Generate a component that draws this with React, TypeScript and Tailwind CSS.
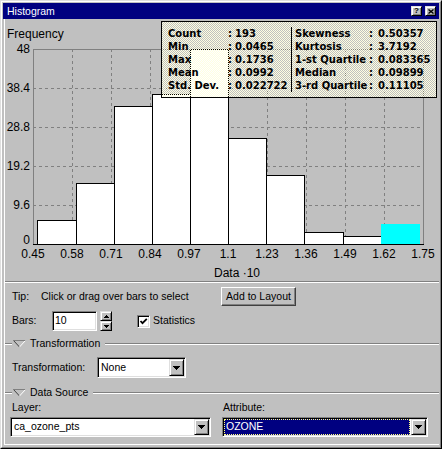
import React from "react";

const counts = [6, 15, 34, 37, 48, 26, 17, 3, 2, 5];
const edges = [37, 76, 114, 152, 190, 228, 266, 304, 343, 381, 420];
const xLabels = ["0.45", "0.58", "0.71", "0.84", "0.97", "1.1", "1.23", "1.36", "1.49", "1.62", "1.75"];
const yLabels = ["48", "38.4", "28.8", "19.2", "9.6", "0"];

const raised =
  "border border-t-[#dfdfdf] border-l-[#dfdfdf] border-r-black border-b-black shadow-[inset_1px_1px_#ffffff,inset_-1px_-1px_#808080]";
const sunken =
  "border border-t-[#808080] border-l-[#808080] border-r-white border-b-white shadow-[inset_1px_1px_#000000,inset_-1px_-1px_#dfdfdf]";

const DownArrow = () => (
  <svg width="7" height="4" viewBox="0 0 7 4" shapeRendering="crispEdges">
    <path d="M0 0H7V1H6V2H5V3H4V4H3V3H2V2H1V1H0Z" fill="#000" />
  </svg>
);

const SmallArrow = ({ up }: { up?: boolean }) => (
  <svg width="5" height="3" viewBox="0 0 5 3" shapeRendering="crispEdges">
    {up ? (
      <path d="M2 0H3V1H4V2H5V3H0V2H1V1H2Z" fill="#000" />
    ) : (
      <path d="M0 0H5V1H4V2H3V3H2V2H1V1H0Z" fill="#000" />
    )}
  </svg>
);

const GroupHeader = ({ label }: { label: string }) => (
  <div className="flex h-[14px] items-center">
    <div className="h-[2px] w-[7px] border-t border-[#808080] bg-white" />
    <svg width="13" height="8" viewBox="0 0 13 8" className="ml-px" shapeRendering="crispEdges">
      <path d="M0.5 0.5H12.5" stroke="#808080" />
      <path d="M0.5 0.5L6.5 7" stroke="#404040" fill="none" shapeRendering="auto" />
      <path d="M6.5 7L12.5 0.5" stroke="#ffffff" fill="none" shapeRendering="auto" />
    </svg>
    <span className="ml-[4px]">{label}</span>
    <div className="ml-[5px] h-[2px] flex-1 border-t border-[#808080] bg-white" />
  </div>
);

const Chart = () => {
  const font = "'Liberation Sans', Arial, sans-serif";
  return (
    <svg width="434" height="262" viewBox="5 19 434 262" className="block shrink-0">
      <text x="7" y="38" fontFamily={font} fontSize="12" fill="#000">
        Frequency
      </text>

      {/* grid */}
      <g stroke="#808080" strokeDasharray="3 3" shapeRendering="crispEdges">
        {[88, 127, 166, 205].map((y) => (
          <line key={y} x1="33" x2="423" y1={y + 0.5} y2={y + 0.5} />
        ))}
        {[72, 111, 150, 189, 228, 267, 306, 345, 384].map((x) => (
          <line key={x} x1={x + 0.5} x2={x + 0.5} y1="49" y2="244" />
        ))}
      </g>
      <g stroke="#808080" shapeRendering="crispEdges">
        <line x1="33.5" x2="33.5" y1="49" y2="244" />
        <line x1="33" x2="423" y1="49.5" y2="49.5" />
        <line x1="423.5" x2="423.5" y1="49" y2="244" />
      </g>

      {/* bars */}
      <g shapeRendering="crispEdges">
        {counts.map((c, i) => {
          const top = 244 - Math.round(c * 4.0625);
          const left = edges[i];
          const w = edges[i + 1] - left;
          if (i === 9) {
            return <rect key={i} x={left} y={top} width={w} height={244 - top} fill="#00ffff" />;
          }
          return (
            <rect
              key={i}
              x={left + 0.5}
              y={top + 0.5}
              width={w}
              height={244 - top}
              fill="#ffffff"
              stroke="#000"
            />
          );
        })}
        <line x1="33" x2="424" y1="244.5" y2="244.5" stroke="#000" />
      </g>

      {/* axis labels */}
      {yLabels.map((l, i) => (
        <text
          key={l}
          x="30"
          y={i === 5 ? 244 : 49 + i * 39 + 4}
          textAnchor="end"
          fontFamily={font}
          fontSize="12"
          fill="#000"
        >
          {l}
        </text>
      ))}
      {xLabels.map((l, i) => (
        <text key={l} x={33 + i * 39} y="258" textAnchor="middle" fontFamily={font} fontSize="12" fill="#000">
          {l}
        </text>
      ))}
      <text x="237" y="277" textAnchor="middle" fontFamily={font} fontSize="12" fill="#000">
        Data ·10
      </text>
    </svg>
  );
};

const StatsBox = () => {
  const left = [
    ["Count", "193"],
    ["Min", "0.0465"],
    ["Max", "0.1736"],
    ["Mean", "0.0992"],
    ["Std. Dev.", "0.022722"],
  ];
  const right = [
    ["Skewness", "0.50357"],
    ["Kurtosis", "3.7192"],
    ["1-st Quartile", "0.083365"],
    ["Median", "0.09899"],
    ["3-rd Quartile", "0.11105"],
  ];
  return (
    <div className="absolute left-[156px] top-[2px] flex h-[77px] w-[276px] border border-black bg-[conic-gradient(#ffffe1_25%,transparent_0_50%,#ffffe1_0_75%,transparent_0)] bg-[length:2px_2px] pl-[6px] pt-[5px] font-['DejaVu_Sans',sans-serif] text-[10px] font-bold leading-[13px] text-black">
      <div className="w-[123px]">
        {left.map(([k, v]) => (
          <div key={k} className="flex whitespace-nowrap">
            <span className="w-[60px]">{k}</span>
            <span className="w-[7px]">:</span>
            <span>{v}</span>
          </div>
        ))}
      </div>
      <div className="h-[65px] border-l border-black pl-[3px]">
        {right.map(([k, v]) => (
          <div key={k} className="flex whitespace-nowrap">
            <span className="w-[74px]">{k}</span>
            <span className="w-[9px]">:</span>
            <span>{v}</span>
          </div>
        ))}
      </div>
    </div>
  );
};

export default function App() {
  return (
    <div className="h-[449px] w-[442px] border border-t-[#dfdfdf] border-l-[#dfdfdf] border-r-black border-b-black bg-[#c0c0c0] font-['Liberation_Sans',Arial,sans-serif] text-[10.5px] text-black">
      <div className="flex h-full flex-col border border-t-white border-l-white border-r-[#808080] border-b-[#808080] p-px">
        {/* title bar */}
        <div className="flex h-[16px] shrink-0 items-center bg-[#000080] pl-[4px] text-white">
          <span className="flex-1 text-[10.5px] leading-none">Histogram</span>
          <div className={`flex h-[10px] w-[11px] items-center justify-center bg-[#c0c0c0] text-[8px] font-bold leading-none text-black ${raised}`}>
            ?
          </div>
          <div className={`ml-[3px] mr-[3px] flex h-[10px] w-[11px] items-center justify-center bg-[#c0c0c0] ${raised}`}>
            <svg width="6" height="5" viewBox="0 0 6 5">
              <path d="M0.5 0.5L5.5 4.5M5.5 0.5L0.5 4.5" stroke="#000" strokeWidth="1.4" />
            </svg>
          </div>
        </div>

        {/* content */}
        <div className="relative mb-px ml-px flex flex-1 flex-col border-b border-l border-white">
          <Chart />
          <StatsBox />

          <div className="h-px bg-[#808080]" />
          <div className="h-px bg-white" />

          {/* tip */}
          <div className="mt-[4px] flex h-[19px] items-center">
            <span className="ml-[7px] w-[29px]">Tip:</span>
            <span className="w-[180px]">Click or drag over bars to select</span>
            <button className="flex h-[19px] w-[75px] items-center justify-center border border-t-white border-l-white border-r-[#404040] border-b-[#404040] bg-[#c0c0c0] text-[10.5px] shadow-[inset_-1px_-1px_#808080]">
              Add to Layout
            </button>
          </div>

          {/* bars */}
          <div className="mt-[5px] flex h-[20px] items-center">
            <span className="ml-[7px] w-[40px]">Bars:</span>
            <div className={`flex h-[20px] w-[45px] items-center bg-white pl-[2px] ${sunken}`}>10</div>
            <div className="ml-[3px] flex h-[20px] w-[12px] flex-col">
              <div className={`flex h-[10px] items-center justify-center bg-[#c0c0c0] ${raised}`}>
                <SmallArrow up />
              </div>
              <div className={`flex h-[10px] items-center justify-center bg-[#c0c0c0] ${raised}`}>
                <SmallArrow />
              </div>
            </div>
            <div className={`ml-[25px] flex h-[13px] w-[13px] items-center justify-center bg-white ${sunken}`}>
              <svg width="9" height="9" viewBox="0 0 9 9">
                <path d="M1.5 4L3.5 6.2L7.8 1.8" stroke="#000" strokeWidth="1.8" fill="none" />
              </svg>
            </div>
            <span className="ml-[3px]">Statistics</span>
          </div>

          {/* transformation */}
          <div className="mt-[6px]">
            <GroupHeader label="Transformation" />
          </div>
          <div className="mt-[6px] flex h-[21px] items-center">
            <span className="ml-[7px] w-[85px]">Transformation:</span>
            <div className={`flex h-[21px] w-[89px] items-center bg-white ${sunken}`}>
              <span className="flex-1 pl-[3px]">None</span>
              <div className={`mr-px flex h-[17px] w-[15px] items-center justify-center bg-[#c0c0c0] ${raised}`}>
                <DownArrow />
              </div>
            </div>
          </div>

          {/* data source */}
          <div className="mt-[8px]">
            <GroupHeader label="Data Source" />
          </div>
          <div className="mt-px flex h-[13px] items-center leading-[13px]">
            <span className="ml-[7px] w-[211px]">Layer:</span>
            <span>Attribute:</span>
          </div>
          <div className="mt-[3px] flex h-[20px] items-center">
            <div className={`ml-[5px] flex h-[20px] w-[201px] items-center bg-white ${sunken}`}>
              <span className="flex-1 pl-[3px]">ca_ozone_pts</span>
              <div className={`mr-px flex h-[16px] w-[15px] items-center justify-center bg-[#c0c0c0] ${raised}`}>
                <DownArrow />
              </div>
            </div>
            <div className={`ml-[11px] flex h-[20px] w-[206px] items-center bg-white ${sunken}`}>
              <div className="ml-px mr-px flex h-[16px] flex-1 items-center border border-dotted border-[#ffff80] bg-[#000080] pl-px text-white">
                OZONE
              </div>
              <div className={`mr-px flex h-[16px] w-[15px] items-center justify-center bg-[#c0c0c0] ${raised}`}>
                <DownArrow />
              </div>
            </div>
          </div>
        </div>
      </div>
    </div>
  );
}
